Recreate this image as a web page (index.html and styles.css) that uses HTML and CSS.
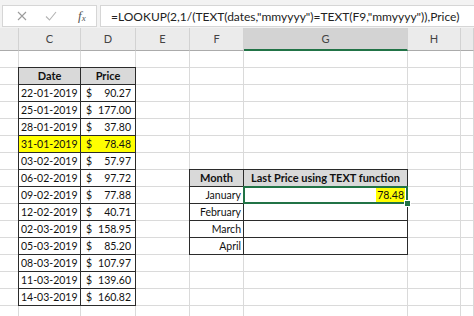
FILE: index.html
```html
<!DOCTYPE html>
<html lang="en">
<head>
    <meta charset="UTF-8">
    <title>LOOKUP last price</title>
    <link rel="stylesheet" href="styles.css">
</head>
<body>
<div class="formula-bar">
    <div class="name-tools">
        <svg class="tool cancel" width="10" height="10" viewBox="0 0 10 10"><path d="M1 1 L9 9 M9 1 L1 9" stroke="#9c9c9c" stroke-width="1.1" fill="none"/></svg>
        <svg class="tool enter" width="12" height="10" viewBox="0 0 12 10"><path d="M1 5.5 L4.5 9 L11 1" stroke="#b4b4b4" stroke-width="1.1" fill="none"/></svg>
        <span class="fx">f<sub>x</sub></span>
    </div>
    <div class="formula">=LOOKUP(2,1/(TEXT(dates,"mmyyyy")=TEXT(F9,"mmyyyy")),Price)</div>
</div>

<div class="col-heads">
    <div class="head"></div>
    <div class="head">C</div>
    <div class="head">D</div>
    <div class="head">E</div>
    <div class="head">F</div>
    <div class="head active">G</div>
    <div class="head">H</div>
    <div class="head"></div>
</div>

<div class="sheet" id="sheet"></div>

<script>
    var dates = ['22-01-2019', '25-01-2019', '28-01-2019', '31-01-2019', '03-02-2019', '06-02-2019', '09-02-2019',
                 '12-02-2019', '02-03-2019', '05-03-2019', '08-03-2019', '11-03-2019', '14-03-2019'];
    var prices = ['90.27', '177.00', '37.80', '78.48', '57.97', '97.72', '77.88',
                  '40.71', '158.95', '85.20', '107.97', '139.60', '160.82'];
    var months = ['January', 'February', 'March', 'April'];

    var sheet = document.getElementById('sheet');

    function cell(cls, html) {
        var div = document.createElement('div');
        div.className = 'cell ' + (cls || '');
        div.innerHTML = html || '';
        sheet.appendChild(div);
    }

    for (var r = 0; r < 16; r++) {
        cell(); // B

        // Date / Price table (rows 1..14)
        if (r === 1) {
            cell('tb th tt tl', 'Date');
            cell('tb th tt', 'Price');
        } else if (r >= 2 && r <= 14) {
            var i = r - 2;
            var hl = dates[i] === '31-01-2019' ? ' hl' : '';
            cell('tb tl' + hl, dates[i]);
            cell('tb money' + hl, '<span>$</span><span>' + prices[i] + '</span>');
        } else {
            cell();
            cell();
        }

        cell(); // E

        // Month table (rows 7..11)
        if (r === 7) {
            cell('tb th tt tl', 'Month');
            cell('tb th tt', 'Last Price using TEXT function');
        } else if (r >= 8 && r <= 11) {
            cell('tb tl right', months[r - 8]);
            if (r === 8) {
                cell('tb right selected', '<span class="mark">78.48</span>');
            } else {
                cell('tb');
            }
        } else {
            cell();
            cell();
        }

        cell(); // H
        cell(); // I
    }
</script>
</body>
</html>
```

FILE: styles.css
```css
body {
    margin: 0;
    background-color: #fff;
    font-family: Lato, "Open Sans", sans-serif;
    overflow: hidden;
}

/* Formula bar */
.formula-bar {
    display: flex;
    gap: 3px;
    height: 28px;
    padding: 5px 0 1px 2px;
    box-sizing: border-box;
    background-color: #f3f3f3;
}

.name-tools {
    flex-shrink: 0;
    display: flex;
    align-items: center;
    width: 95px;
    padding-left: 14px;
    box-sizing: border-box;
    background-color: #fff;
    border: 1px solid #d6d6d6;
}

.tool.enter {
    margin-left: 18px;
}

.fx {
    margin-left: 21px;
    font-family: "Liberation Serif", serif;
    font-style: italic;
    font-size: 13px;
    color: #555;
}

.fx sub {
    font-size: 9px;
    vertical-align: -1px;
}

.formula {
    flex: 1;
    min-width: 0;
    overflow: hidden;
    display: flex;
    align-items: center;
    padding-left: 10px;
    background-color: #fff;
    border: 1px solid #d6d6d6;
    border-right: none;
    font-size: 12px;
    color: #222;
    white-space: nowrap;
}

/* Column headers */
.col-heads,
.sheet {
    display: grid;
    grid-template-columns: 19px 62px 55px 54px 54px 164px 53px 1fr;
}

.head {
    height: 23px;
    box-sizing: border-box;
    border-right: 1px solid #d2d2d2;
    border-bottom: 1px solid #ababab;
    background-color: #ebebeb;
    color: #444;
    font-size: 11px;
    text-align: center;
    line-height: 22px;
}

.head.active {
    background-color: #d3d3d3;
    border-bottom: 2px solid #217346;
}

/* Cells */
.sheet {
    grid-auto-rows: 17px;
}

.cell {
    position: relative;
    box-sizing: border-box;
    border-right: 1px solid #dadada;
    border-bottom: 1px solid #dadada;
    padding: 0 2px;
    font-size: 10.5px;
    line-height: 16px;
    color: #111;
    white-space: nowrap;
}

.cell.tb {
    border-right-color: #2b2b2b;
    border-bottom-color: #2b2b2b;
}

.cell.tl {
    box-shadow: -1px 0 0 #2b2b2b;
}

.cell.tt {
    box-shadow: 0 -1px 0 #2b2b2b;
}

.cell.tt.tl {
    box-shadow: -1px 0 0 #2b2b2b, 0 -1px 0 #2b2b2b, -1px -1px 0 #2b2b2b;
}

.cell.th {
    background-color: #d9d9d9;
    font-size: 11px;
    font-weight: bold;
    text-align: center;
}

.cell.right {
    text-align: right;
}

.cell.money {
    display: flex;
    justify-content: space-between;
    padding: 0 4px 0 5px;
}

.cell.hl {
    background-color: #ffff00;
}

.mark {
    background-color: #ffff00;
    padding: 1px 1px;
}

/* Active cell */
.cell.selected::after {
    content: "";
    position: absolute;
    top: -1px;
    left: -1px;
    right: -1px;
    bottom: -1px;
    border: 2px solid #217346;
}

.cell.selected::before {
    content: "";
    position: absolute;
    right: -4px;
    bottom: -4px;
    width: 5px;
    height: 5px;
    background-color: #217346;
    border: 1px solid #fff;
    z-index: 1;
}
```
